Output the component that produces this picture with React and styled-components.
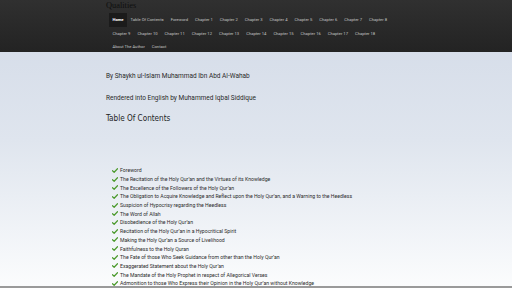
import React from 'react';
import styled, { createGlobalStyle } from 'styled-components';

const GlobalStyle = createGlobalStyle`
  html, body {
    margin: 0;
    padding: 0;
    height: 100%;
  }
  body {
    font-family: Roboto, "Liberation Sans", sans-serif;
    background: linear-gradient(to bottom, #d2dae7 0px, #dfe5ee 140px, #fbfcfd 286px);
    overflow: hidden;
  }
`;

const Page = styled.div`
  width: 512px;
  height: 288px;
  display: flex;
  flex-direction: column;
`;

const Header = styled.header`
  height: 52px;
  background: linear-gradient(to bottom, #303030, #232323);
  flex-shrink: 0;
`;

const Container = styled.div`
  width: 300px;
  margin: 0 auto;
`;

const SiteTitle = styled.div`
  font-family: "Liberation Serif", serif;
  font-size: 8.4px;
  line-height: 10px;
  color: #0e0e0e;
  padding-top: 1px;
  height: 12px;
`;

const Nav = styled.ul`
  list-style: none;
  margin: 0;
  padding: 0 0 0 3px;
  display: flex;
  flex-wrap: wrap;
  width: 294px;
`;

const NavItem = styled.li`
  font-size: 4.15px;
  line-height: 13.5px;
  height: 13.5px;
  padding: 0 3.5px;
  color: ${p => (p.$active ? '#ffffff' : '#c4c4c4')};
  font-weight: ${p => (p.$active ? 700 : 400)};
  background: ${p => (p.$active ? '#1b1b1b' : 'transparent')};
  white-space: nowrap;
`;

const Main = styled.main`
  flex: 1;
  border-bottom: 2px solid #9a9a9a;
  box-sizing: border-box;
  height: 236px;
  overflow: hidden;
`;

const Byline = styled.p`
  font-size: 6.5px;
  color: #2a2a2a;
  margin: 0;
  line-height: 9px;
`;

const Author = styled(Byline)`
  margin-top: 20px;
`;

const Translator = styled(Byline)`
  margin-top: 13px;
`;

const Heading = styled.h2`
  font-family: "DejaVu Sans Condensed", "Liberation Sans Narrow", "Liberation Sans", sans-serif;
  font-weight: 400;
  font-size: 8.1px;
  color: #1e1e1e;
  margin: 9px 0 0;
  line-height: 12px;
`;

const TocList = styled.ul`
  list-style: none;
  margin: 42px 0 0;
  padding: 0 0 0 6px;
`;

const TocItem = styled.li`
  display: flex;
  align-items: center;
  height: 8.7px;
  font-size: 5.15px;
  color: #2b2b2b;
  white-space: nowrap;
`;

const Check = styled.svg`
  width: 6px;
  height: 5px;
  margin-right: 2px;
  flex-shrink: 0;
`;

const CheckIcon = () => (
  <Check viewBox="0 0 12 10">
    <path d="M1 5.5 L4.3 8.5 L11 1.5" fill="none" stroke="#4b9a2c" strokeWidth="2.4" strokeLinecap="round" strokeLinejoin="round" />
  </Check>
);

const navLinks = [
  'Home', 'Table Of Contents', 'Foreword',
  ...Array.from({ length: 18 }, (_, i) => `Chapter ${i + 1}`),
  'About The Author', 'Contact',
];

const chapters = [
  'Foreword',
  'The Recitation of the Holy Qur\u2019an and the Virtues of its Knowledge',
  'The Excellence of the Followers of the Holy Qur\u2019an',
  'The Obligation to Acquire Knowledge and Reflect upon the Holy Qur\u2019an, and a Warning to the Heedless',
  'Suspicion of Hypocrisy regarding the Heedless',
  'The Word of Allah',
  'Disobedience of the Holy Qur\u2019an',
  'Recitation of the Holy Qur\u2019an in a Hypocritical Spirit',
  'Making the Holy Qur\u2019an a Source of Livelihood',
  'Faithfulness to the Holy Quran',
  'The Fate of those Who Seek Guidance from other than the Holy Qur\u2019an',
  'Exaggerated Statement about the Holy Qur\u2019an',
  'The Mandate of the Holy Prophet in respect of Allegorical Verses',
  'Admonition to those Who Express their Opinion in the Holy Qur\u2019an without Knowledge',
];

export default function App() {
  return (
    <Page>
      <GlobalStyle />
      <Header>
        <Container>
          <SiteTitle>Qualities</SiteTitle>
          <Nav>
            {navLinks.map((link, i) => (
              <NavItem key={link} $active={i === 0}>{link}</NavItem>
            ))}
          </Nav>
        </Container>
      </Header>
      <Main>
        <Container>
          <Author>By Shaykh ul-Islam Muhammad Ibn Abd Al-Wahab</Author>
          <Translator>Rendered into English by Muhammed Iqbal Siddique</Translator>
          <Heading>Table Of Contents</Heading>
          <TocList>
            {chapters.map(title => (
              <TocItem key={title}>
                <CheckIcon />
                {title}
              </TocItem>
            ))}
          </TocList>
        </Container>
      </Main>
    </Page>
  );
}
